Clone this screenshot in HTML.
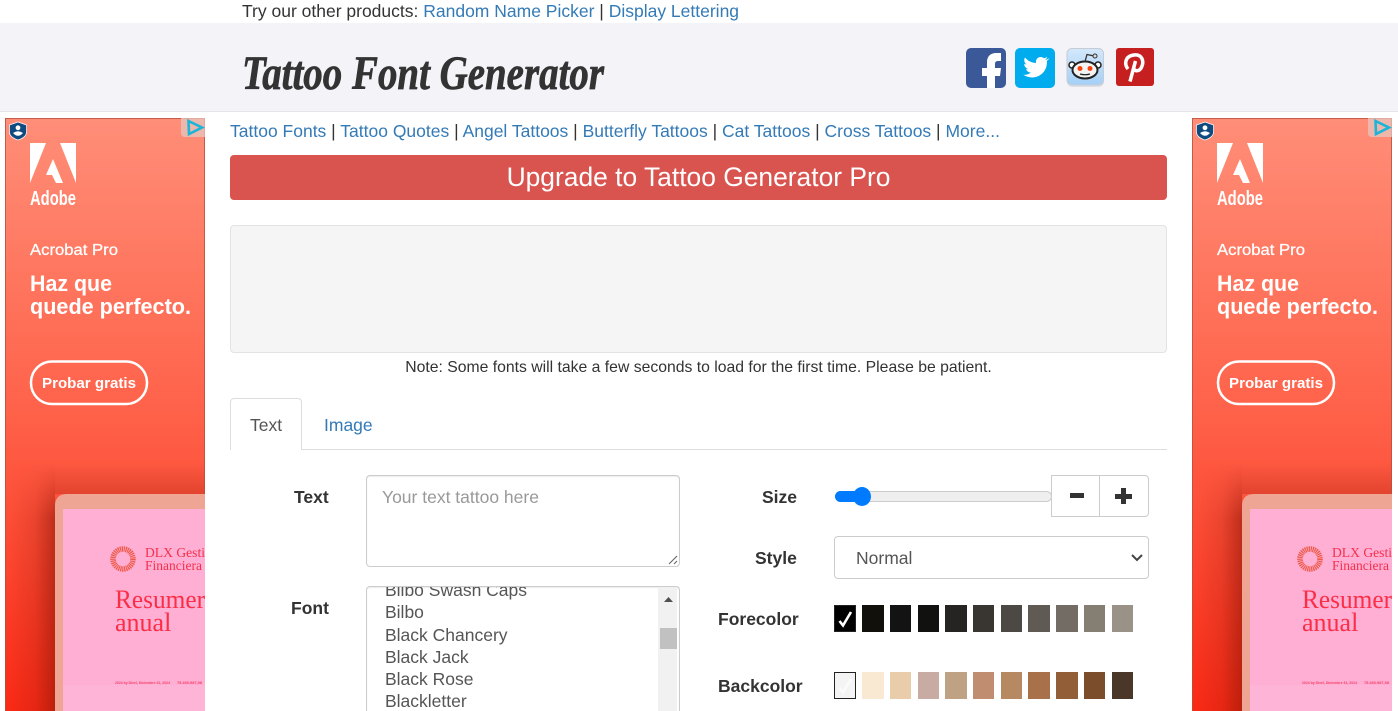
<!DOCTYPE html>
<html lang="en"><head><meta charset="utf-8"><title>Tattoo Font Generator</title>
<style>
html{margin:0;padding:0;background:#fff;width:1398px;height:711px;overflow:hidden}
body{margin:0;padding:0;background:#fff;width:1398px;height:711px;position:relative;overflow:hidden;font-family:"Liberation Sans",sans-serif;font-size:17.5px;color:#333}
a{color:#337ab7;text-decoration:none}
.t{position:absolute;white-space:nowrap;line-height:22px}
.b{position:absolute;box-sizing:border-box}
.l{font-weight:bold;color:#333}
.s{position:absolute;height:27px}
svg{position:absolute;display:block}
</style></head><body>
<div class="t" style="left:242px;top:0">Try our other products: <a href="#">Random Name Picker</a> | <a href="#">Display Lettering</a></div>
<div class="b" style="left:0;top:23px;width:1398px;height:89px;background:#f3f3f8;border-bottom:1px solid #e5e5e8"></div>
<svg style="left:230px;top:40px" width="390" height="70"><text x="12" y="49" font-family="Liberation Serif" font-weight="bold" font-style="italic" font-size="48" fill="#333" stroke="#333" stroke-width=".7" textLength="362" lengthAdjust="spacingAndGlyphs">Tattoo Font Generator</text></svg>

<svg style="left:966px;top:48px" width="40" height="40"><rect width="40" height="40" rx="5" fill="#3b5998"/><path d="M21 40V28h-5v-8h5v-6c0-6 4-9 9-9h5v8h-3c-2 0-3 1-3 3v4h6l-1 8h-5v12z" fill="#fff"/></svg>
<svg style="left:1015px;top:48px" width="40" height="40"><rect width="40" height="40" rx="5" fill="#00aced"/><path d="M33 11c-1 .5-2 .8-3 1 1-.7 2-1.800 2.300-3-1 .6-2.200 1-3.300 1.300-2.500-2.800-8.800-1.200-8 4.700-4.500-.2-8.500-2.300-11-5.500-1.400 2.400-.7 5.500 1.600 7-.9 0-1.700-.3-2.400-.6 0 2.500 1.800 4.600 4.200 5.100-.8.200-1.500.2-2.300.1.700 2 2.600 3.500 4.800 3.500-2.200 1.700-4.900 2.500-7.600 2.200 11 7 24.500-.5 23.600-13.900 1.200-.8 2-1.800 2.700-2.900z" fill="#fff"/></svg>
<svg style="left:1066px;top:48px" width="39" height="40"><defs><linearGradient id="rd" x1="0" y1="0" x2="0" y2="1"><stop offset="0" stop-color="#d4e8fb"/><stop offset="1" stop-color="#a4d0f8"/></linearGradient></defs><rect x="1" y="2" width="37" height="37" rx="5" fill="#dfe0e6"/><rect x="1" y=".5" width="36.500" height="36.500" rx="5" fill="url(#rd)" stroke="#c5ccd3"/><circle cx="6" cy="17" r="3" fill="#fff" stroke="#222" stroke-width="1.500"/><circle cx="32" cy="17" r="3" fill="#fff" stroke="#222" stroke-width="1.500"/><ellipse cx="19" cy="22" rx="12.500" ry="8.500" fill="#f4f4f4" stroke="#222" stroke-width="2"/><circle cx="14" cy="20.500" r="2.500" fill="#f8420a"/><circle cx="24" cy="20.500" r="2.500" fill="#f8420a"/><path d="M14 26q5 1.500 10 0" fill="none" stroke="#222" stroke-width="1.300"/><path d="M19 13.500l2-7 7 1.500" fill="none" stroke="#333" stroke-width="1.300"/><circle cx="29" cy="8" r="2" fill="#ddd" stroke="#333"/></svg>
<svg style="left:1116px;top:48px" width="38" height="38"><rect width="38" height="38" rx="3" fill="#c5201f"/><path d="M12 21C8 16 9 8 18 7c8-1 10 6 8 11-1.500 5-6 6-8 3" fill="none" stroke="#fff" stroke-width="3.500"/><path d="M19.500 13L14 33.500" fill="none" stroke="#fff" stroke-width="3.500"/></svg>

<svg width="0" height="0" style="position:absolute"><defs>
<linearGradient id="ag" x1="0" y1="0" x2="0" y2="1"><stop offset="0" stop-color="#ff8e78"/><stop offset=".5" stop-color="#ff6149"/><stop offset="1" stop-color="#f92a16"/></linearGradient>
<linearGradient id="shx" x1="0" y1="0" x2="1" y2="0"><stop offset="0" stop-color="#8a1605" stop-opacity="0"/><stop offset=".55" stop-color="#8a1605" stop-opacity=".16"/><stop offset="1" stop-color="#8a1605" stop-opacity=".55"/></linearGradient>
<linearGradient id="shy" x1="0" y1="0" x2="0" y2="1"><stop offset="0" stop-color="#8a1605" stop-opacity="0"/><stop offset="1" stop-color="#8a1605" stop-opacity=".24"/></linearGradient>
<linearGradient id="mk" x1="0" y1="0" x2="0" y2="1"><stop offset="0" stop-color="#000"/><stop offset="1" stop-color="#fff"/></linearGradient>
<mask id="fade" maskUnits="userSpaceOnUse" x="0" y="345" width="60" height="248"><rect x="0" y="345" width="60" height="55" fill="url(#mk)"/><rect x="0" y="400" width="60" height="193" fill="#fff"/></mask>
<g id="ad">
<rect x="0" y="0" width="200" height="593" fill="url(#ag)"/>
<rect x="5" y="345" width="45" height="248" fill="url(#shx)" mask="url(#fade)"/>
<rect x="50" y="345" width="150" height="31" fill="url(#shy)"/>
<path d="M.5 593V.5h199V593" fill="none" stroke="#b5503f" stroke-opacity=".8"/>
<path d="M176 0h24v19h-20q-4 0-4-4z" fill="#e8c6bf" fill-opacity=".75"/>
<path d="M183.500 3L197 9.500 184 16z" fill="none" stroke="#1cb5d8" stroke-width="2.600"/>
<path d="M13 4l8.500 3v7c0 4-4 6.500-8.500 8-4.500-1.500-8.500-4-8.500-8V7z" fill="#0f4a80" stroke="#fff" stroke-width=".7"/><circle cx="13" cy="9.800" r="2.400" fill="#fff"/><path d="M8 15q5-3.500 10 0-5 5.500-10 0z" fill="#fff"/>
<path d="M25 25h16L25 65zM55 25h16v40zM48 41l10 24h-7l-4-8h-6z" fill="#fff"/>
<text x="25" y="87" font-family="Liberation Sans" font-weight="bold" font-size="20" fill="#fff" textLength="46" lengthAdjust="spacingAndGlyphs">Adobe</text>
<text x="25" y="137" font-family="Liberation Sans" font-size="15.500" fill="#fff" stroke="#fff" stroke-width=".25" textLength="88" lengthAdjust="spacingAndGlyphs">Acrobat Pro</text>
<text x="25" y="173" font-family="Liberation Sans" font-weight="bold" font-size="22" fill="#fff" textLength="82" lengthAdjust="spacingAndGlyphs">Haz que</text>
<text x="25" y="196" font-family="Liberation Sans" font-weight="bold" font-size="22" fill="#fff" textLength="161" lengthAdjust="spacingAndGlyphs">quede perfecto.</text>
<rect x="26" y="243.500" width="116" height="42.500" rx="21" fill="none" stroke="#fff" stroke-width="2.500"/>
<text x="37" y="270" font-family="Liberation Sans" font-weight="bold" font-size="15" fill="#fff" textLength="94" lengthAdjust="spacingAndGlyphs">Probar gratis</text>
<path d="M50 593V388q0-12 12-12h138v217z" fill="#eea593"/>
<rect x="58" y="391" width="142" height="202" fill="#ffaed4"/>
<rect x="58" y="567" width="142" height="26" fill="#fdb4d6"/>
<circle cx="118" cy="441" r="10" fill="none" stroke="#ee5a48" stroke-width="5.500" stroke-dasharray="1.200 .7"/>
<text x="140" y="439" font-family="Liberation Serif" font-size="14" fill="#f5304a" textLength="60" lengthAdjust="spacingAndGlyphs">DLX Gesti</text>
<text x="140" y="452" font-family="Liberation Serif" font-size="13.500" fill="#f5304a" textLength="57" lengthAdjust="spacingAndGlyphs">Financiera</text>
<text x="110" y="490" font-family="Liberation Serif" font-size="26" fill="#fa2e46" textLength="90" lengthAdjust="spacingAndGlyphs">Resumer</text>
<text x="110" y="513" font-family="Liberation Serif" font-size="26" fill="#fa2e46">anual</text>
<text x="110" y="566" font-family="Liberation Sans" font-weight="bold" font-size="4" fill="#f5406a" textLength="55" lengthAdjust="spacingAndGlyphs">2024 by Dixel, Diciembre 31, 2024</text>
<text x="172" y="566" font-family="Liberation Sans" font-weight="bold" font-size="4" fill="#f5406a" textLength="25" lengthAdjust="spacingAndGlyphs">75.460.987,98</text>
</g></defs></svg>
<svg style="left:5px;top:118px" width="200" height="593"><use href="#ad"/></svg>
<svg style="left:1192px;top:118px" width="200" height="593"><use href="#ad"/></svg>

<div class="t" style="left:230px;top:120px"><a href="#">Tattoo Fonts</a> | <a href="#">Tattoo Quotes</a> | <a href="#">Angel Tattoos</a> | <a href="#">Butterfly Tattoos</a> | <a href="#">Cat Tattoos</a> | <a href="#">Cross Tattoos</a> | <a href="#">More...</a></div>
<div class="b" style="left:230px;top:155px;width:937px;height:45px;background:#d9534f;border-radius:4px;color:#fff;font-size:26.400px;line-height:44px;text-align:center">Upgrade to Tattoo Generator Pro</div>
<div class="b" style="left:230px;top:225px;width:937px;height:128px;background:#f5f5f5;border:1px solid #e3e3e3;border-radius:4px"></div>
<div class="t" style="left:230px;top:357px;width:937px;text-align:center;font-size:15.750px">Note: Some fonts will take a few seconds to load for the first time. Please be patient.</div>

<div class="b" style="left:230px;top:449px;width:937px;height:1px;background:#ddd"></div>
<div class="b" style="left:230px;top:398px;width:72px;height:52px;background:#fff;border:1px solid #ddd;border-bottom:0;border-radius:4px 4px 0 0"></div>
<div class="t" style="left:250px;top:414px;color:#555">Text</div>
<div class="t" style="left:324px;top:414px"><a href="#">Image</a></div>

<div class="t l" style="left:294px;top:486px">Text</div>
<div class="b" style="left:366px;top:475px;width:314px;height:92px;border:1px solid #ccc;border-radius:4px;box-shadow:inset 0 1px 1px rgba(0,0,0,.075)"></div>
<div class="t" style="left:382px;top:486px;color:#999">Your text tattoo here</div>
<svg style="left:667px;top:554px" width="12" height="12"><path d="M2 10L10 2M7 10l3-3" stroke="#666" stroke-width="1.100" fill="none"/></svg>

<div class="t l" style="left:291px;top:597px">Font</div>
<div class="b" style="left:366px;top:586px;width:314px;height:125px;border:1px solid #ccc;border-bottom:0;border-radius:4px 4px 0 0;overflow:hidden;color:#555;box-shadow:inset 0 1px 1px rgba(0,0,0,.075)">
<div class="t" style="left:18px;top:-8px">Bilbo Swash Caps</div>
<div class="t" style="left:18px;top:14px">Bilbo</div>
<div class="t" style="left:18px;top:37px">Black Chancery</div>
<div class="t" style="left:18px;top:59px">Black Jack</div>
<div class="t" style="left:18px;top:81px">Black Rose</div>
<div class="t" style="left:18px;top:103px;height:21px;line-height:22px;overflow:hidden">Blackletter</div>
<div class="b" style="left:291px;top:0;width:19px;height:124px;background:#f1f1f1"></div>
<div class="b" style="left:293px;top:41px;width:17px;height:21px;background:#c1c1c1"></div>
<svg style="left:297px;top:10px" width="9" height="5"><path d="M0 5L4.500 0 9 5z" fill="#505050"/></svg>
</div>

<div class="t l" style="left:762px;top:486px">Size</div>
<div class="b" style="left:835px;top:491px;width:217px;height:11px;background:#efefef;border:1px solid #ccc;border-radius:6px"></div>
<div class="b" style="left:835px;top:491px;width:26px;height:11px;background:#007bff;border-radius:6px 0 0 6px"></div>
<div class="b" style="left:853px;top:487px;width:18px;height:19px;background:#007bff;border-radius:50%"></div>
<div class="b" style="left:1051px;top:475px;width:98px;height:42px;border:1px solid #ccc;border-radius:0 4px 4px 0"></div>
<div class="b" style="left:1099px;top:475px;width:1px;height:42px;background:#ccc"></div>
<div class="b" style="left:1070px;top:493px;width:14px;height:5px;background:#333"></div>
<div class="b" style="left:1115px;top:493.500px;width:17px;height:5px;background:#333"></div>
<div class="b" style="left:1121px;top:488px;width:5px;height:16px;background:#333"></div>

<div class="t l" style="left:755px;top:547px">Style</div>
<div class="b" style="left:834px;top:536px;width:315px;height:43px;border:1px solid #ccc;border-radius:4px"></div>
<div class="t" style="left:856px;top:547px;color:#555">Normal</div>
<svg style="left:1131px;top:554px" width="12" height="8"><path d="M1 1l5 5 5-5" fill="none" stroke="#444" stroke-width="2"/></svg>

<div class="t l" style="left:718px;top:608px">Forecolor</div>
<div class="t l" style="left:718px;top:675px">Backcolor</div>
<div class="s b" style="left:834px;top:605px;width:22px;background:#000;border:1px solid #222"></div>
<svg style="left:834px;top:605px" width="22" height="27"><path d="M5.500 16l3.500 4.500L17 7" fill="none" stroke="#fff" stroke-width="2.600"/></svg>
<div class="s" style="left:862px;top:605px;width:22px;background:#12100b"></div>
<div class="s" style="left:890px;top:605px;width:21px;background:#131313"></div>
<div class="s" style="left:918px;top:605px;width:21px;background:#11110f"></div>
<div class="s" style="left:945px;top:605px;width:22px;background:#252422"></div>
<div class="s" style="left:973px;top:605px;width:21px;background:#393632"></div>
<div class="s" style="left:1001px;top:605px;width:21px;background:#4c4945"></div>
<div class="s" style="left:1028px;top:605px;width:22px;background:#5f5a53"></div>
<div class="s" style="left:1056px;top:605px;width:22px;background:#726c65"></div>
<div class="s" style="left:1084px;top:605px;width:21px;background:#857e73"></div>
<div class="s" style="left:1112px;top:605px;width:21px;background:#9a9286"></div>
<div class="s b" style="left:834px;top:672px;width:22px;background:#f4f4f4;border:1px solid #222"></div>
<svg style="left:834px;top:672px" width="22" height="27"><path d="M5.500 16l3.500 4.500L17 7" fill="none" stroke="#fbfbfb" stroke-width="2.600"/></svg>
<div class="s" style="left:862px;top:672px;width:22px;background:#f9e8d2"></div>
<div class="s" style="left:890px;top:672px;width:21px;background:#e9ccaa"></div>
<div class="s" style="left:918px;top:672px;width:21px;background:#c8aca3"></div>
<div class="s" style="left:945px;top:672px;width:22px;background:#bfa283"></div>
<div class="s" style="left:973px;top:672px;width:21px;background:#c08d70"></div>
<div class="s" style="left:1001px;top:672px;width:21px;background:#b78962"></div>
<div class="s" style="left:1028px;top:672px;width:22px;background:#a9714a"></div>
<div class="s" style="left:1056px;top:672px;width:22px;background:#925e38"></div>
<div class="s" style="left:1084px;top:672px;width:21px;background:#7b4d2b"></div>
<div class="s" style="left:1112px;top:672px;width:21px;background:#4a3728"></div>
</body></html>
